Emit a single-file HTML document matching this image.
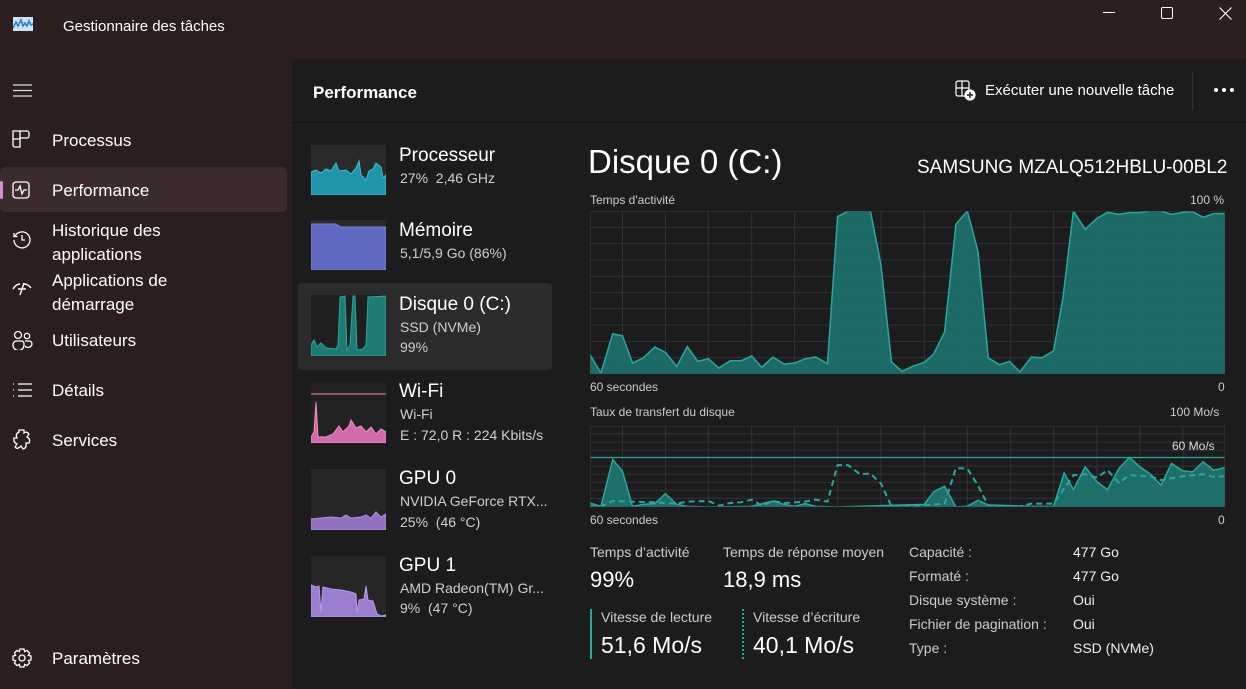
<!DOCTYPE html>
<html><head><meta charset="utf-8"><style>
*{margin:0;padding:0;box-sizing:border-box}
body{width:1246px;height:679px;overflow:hidden;background:#2a1e1f;font-family:"Liberation Sans",sans-serif;color:#fff;position:relative}
.a{position:absolute;white-space:nowrap}
.nav{font-size:17px;color:#fff}
.ic{position:absolute;left:12px}
.main{position:absolute;left:292px;top:59px;width:960px;height:630px;background:#1c1c1c;border-top-left-radius:8px}
.s{font-size:13px;color:#cfcfcf}
.g{color:#cccccc}
</style></head><body>
<!-- title bar -->
<svg class="a" style="left:13px;top:17px" width="20" height="14" viewBox="0 0 20 14"><rect width="20" height="14" fill="#cfe3f5"/><path d="M0 11 L3 5 L5 9 L8 3 L10 9 L12 6 L14 9 L16 4 L18 8 L20 7" stroke="#2f7fd0" stroke-width="1.6" fill="none"/></svg>
<div class="a" style="left:63px;top:18px;font-size:15px">Gestionnaire des tâches</div>
<div class="a" style="left:1103px;top:12px;width:12px;height:1px;background:#fff"></div>
<div class="a" style="left:1161px;top:7px;width:12px;height:12px;border:1px solid #fff;border-radius:2px"></div>
<svg class="a" style="left:1219px;top:7px" width="13" height="13"><path d="M0.5 0.5L12.5 12.5M12.5 0.5L0.5 12.5" stroke="#fff" stroke-width="1.1"/></svg>

<!-- sidebar -->
<svg class="a" style="left:13px;top:84px" width="19" height="13"><path d="M0 1H19M0 6.5H19M0 12H19" stroke="#ddd" stroke-width="1.2"/></svg>
<svg class="ic" style="top:130px" width="18" height="18" viewBox="0 0 18 18" fill="none" stroke="#fff" stroke-width="1.3"><path d="M1 1H8V17H3A2 2 0 0 1 1 15Z M1 9H8 M8 1H15A2 2 0 0 1 17 3V6A2 2 0 0 1 15 8H8"/></svg>
<div class="a nav" style="left:52px;top:131px">Processus</div>
<div class="a" style="left:0;top:167px;width:287px;height:45px;background:#3a2c2d;border-radius:5px"></div>
<div class="a" style="left:0;top:181px;width:3px;height:18px;background:#d98ad9;border-radius:2px"></div>
<svg class="ic" style="top:181px" width="18" height="18" viewBox="0 0 18 18" fill="none" stroke="#fff" stroke-width="1.3"><rect x="1" y="1" width="16" height="16" rx="3"/><path d="M3 9H6L8 5L10 13L12 9H15"/></svg>
<div class="a nav" style="left:52px;top:181px">Performance</div>
<svg class="ic" style="top:230px" width="20" height="20" viewBox="0 0 20 20" fill="none" stroke="#fff" stroke-width="1.3"><path d="M3 6A8 8 0 1 1 2 10M2 3V6.5H5.5M10 5V10H13"/></svg>
<div class="a nav" style="left:52px;top:219px;line-height:24px">Historique des<br>applications</div>
<svg class="ic" style="top:280px" width="20" height="16" viewBox="0 0 20 16" fill="none" stroke="#fff" stroke-width="1.4"><path d="M1 9Q4 4 8 4M12 4Q16 4 19 8M8 15L12 3M6 9L14 9"/></svg>
<div class="a nav" style="left:52px;top:269px;line-height:24px">Applications de<br>démarrage</div>
<svg class="ic" style="top:330px" width="21" height="20" viewBox="0 0 21 20" fill="none" stroke="#fff" stroke-width="1.3"><circle cx="6" cy="5" r="3.5"/><circle cx="15" cy="6" r="2.7"/><path d="M1 14A4 4 0 0 1 4 11H10A3 3 0 0 1 12 14V15A4 4 0 0 1 1 15ZM13 11H17A3 3 0 0 1 20 14A4 4 0 0 1 13 16"/></svg>
<div class="a nav" style="left:52px;top:331px">Utilisateurs</div>
<svg class="ic" style="top:383px" width="20" height="14" viewBox="0 0 20 14" fill="none" stroke="#fff" stroke-width="1.3"><path d="M6 1H20M6 7H20M6 13H20M1 1H2M1 7H2M1 13H2"/></svg>
<div class="a nav" style="left:52px;top:381px">Détails</div>
<svg class="ic" style="top:429px" width="20" height="22" viewBox="0 0 20 22" fill="none" stroke="#fff" stroke-width="1.3"><path d="M7 1H12L12 4Q15 2 17 5L15 8Q19 10 17 14L14 14Q15 19 11 20L9 17Q5 21 3 18L5 15Q1 13 2 9L5 9Q3 5 7 3Z"/></svg>
<div class="a nav" style="left:52px;top:431px">Services</div>
<svg class="ic" style="top:648px" width="20" height="20" viewBox="0 0 20 20" fill="none" stroke="#fff" stroke-width="1.3"><circle cx="10" cy="10" r="3"/><path d="M8 1H12L12.6 3.6L15 2.4L17.6 5L16.4 7.4L19 8V12L16.4 12.6L17.6 15L15 17.6L12.6 16.4L12 19H8L7.4 16.4L5 17.6L2.4 15L3.6 12.6L1 12V8L3.6 7.4L2.4 5L5 2.4L7.4 3.6Z"/></svg>
<div class="a nav" style="left:52px;top:649px">Paramètres</div>

<!-- main -->
<div class="main"></div>
<div class="a" style="left:292px;top:122px;width:954px;height:1px;background:#111"></div>
<div class="a" style="left:313px;top:83px;font-size:17px;font-weight:bold">Performance</div>
<svg class="a" style="left:955px;top:80px" width="21" height="21" viewBox="0 0 21 21" fill="none" stroke="#fff" stroke-width="1.2"><path d="M10 16H3A2 2 0 0 1 1 14V3A2 2 0 0 1 3 1H12A2 2 0 0 1 14 3V10M1 8H14M7 1V16"/><circle cx="15" cy="15" r="5" fill="#fff"/><path d="M15 12V18M12 15H18" stroke="#1c1c1c" stroke-width="1.4"/></svg>
<div class="a" style="left:985px;top:82px;font-size:15px">Exécuter une nouvelle tâche</div>
<div class="a" style="left:1192px;top:72px;width:1px;height:38px;background:#333"></div>
<svg class="a" style="left:1213px;top:87px" width="22" height="6"><circle cx="3" cy="3" r="2" fill="#fff"/><circle cx="11" cy="3" r="2" fill="#fff"/><circle cx="19" cy="3" r="2" fill="#fff"/></svg>

<!-- list -->
<div class="a" style="left:298px;top:283px;width:254px;height:87px;background:#2b2b2b;border-radius:3px"></div>
<svg class="a" style="left:311px;top:145px" width="75" height="50" viewBox="0 0 75 50"><rect width="75" height="50" fill="#2a2a2a"/><path d="M0 27L5 25L10 28L15 24L20 26L25 18L28 26L35 25L40 29L45 23L48 16L50 30L55 35L58 26L62 24L65 18L70 22L72 33L75 30V50H0Z" fill="#1e95a8" stroke="#3ac0d4"/></svg>
<div class="a" style="left:399px;top:145px;font-size:19px">Processeur</div>
<div class="a s" style="left:400px;top:170px;font-size:14px">27%&nbsp; 2,46 GHz</div>
<svg class="a" style="left:311px;top:220px" width="75" height="50" viewBox="0 0 75 50"><rect width="75" height="50" fill="#2a2a2a"/><path d="M0 4L24 4L30 7L75 7V50H0Z" fill="#5f69bf" stroke="#7a84e0"/></svg>
<div class="a" style="left:399px;top:220px;font-size:19px">Mémoire</div>
<div class="a s" style="left:400px;top:245px;font-size:14px">5,1/5,9 Go (86%)</div>
<svg class="a" style="left:311px;top:295px" width="75" height="61" viewBox="0 0 75 61"><rect width="75" height="61" fill="#1f1f1f"/><path d="M0 50L3 45L6 52L10 48L15 53L25 54L27 50L29 2L34 1L36 55L39 50L42 1L44 1L46 55L52 54L55 50L57 2L75 1V61H0Z" fill="#1f7a72" stroke="#2aa79d"/></svg>
<div class="a" style="left:399px;top:294px;font-size:19px">Disque 0 (C:)</div>
<div class="a s" style="left:400px;top:319px;font-size:14px">SSD (NVMe)</div>
<div class="a s" style="left:400px;top:339px;font-size:14px">99%</div>
<svg class="a" style="left:311px;top:382px" width="75" height="61" viewBox="0 0 75 61"><rect width="75" height="61" fill="#222"/><path d="M0 12H75" stroke="#f08cc8"/><path d="M0 55L3 50L5 20L7 55L15 55L22 52L28 44L32 50L38 44L40 38L45 46L50 44L55 50L60 45L65 52L70 47L75 50V61H0Z" fill="#d06aa8" stroke="#f090c8"/></svg>
<div class="a" style="left:399px;top:381px;font-size:19px">Wi-Fi</div>
<div class="a s" style="left:400px;top:406px;font-size:14px">Wi-Fi</div>
<div class="a s" style="left:400px;top:427px;font-size:14px">E : 72,0 R : 224 Kbits/s</div>
<svg class="a" style="left:311px;top:469px" width="75" height="61" viewBox="0 0 75 61"><rect width="75" height="61" fill="#262626"/><path d="M0 50L10 49L20 48L30 49L35 46L40 49L50 48L55 46L60 49L65 43L70 48L75 45V61H0Z" fill="#9172c0" stroke="#b090e0"/></svg>
<div class="a" style="left:399px;top:468px;font-size:19px">GPU 0</div>
<div class="a s" style="left:400px;top:493px;font-size:14px">NVIDIA GeForce RTX...</div>
<div class="a s" style="left:400px;top:514px;font-size:14px">25%&nbsp; (46 °C)</div>
<svg class="a" style="left:311px;top:556px" width="75" height="61" viewBox="0 0 75 61"><rect width="75" height="61" fill="#262626"/><path d="M0 29L5 31L8 30L10 56L12 31L20 33L30 34L40 36L45 38L46 57L48 44L53 43L55 30L57 44L62 45L66 58L70 60L75 59V61H0Z" fill="#9a7fd0" stroke="#b69ae8"/></svg>
<div class="a" style="left:399px;top:555px;font-size:19px">GPU 1</div>
<div class="a s" style="left:400px;top:580px;font-size:14px">AMD Radeon(TM) Gr...</div>
<div class="a s" style="left:400px;top:600px;font-size:14px">9%&nbsp; (47 °C)</div>

<!-- detail -->
<div class="a" style="left:588px;top:143px;font-size:33px">Disque 0 (C:)</div>
<div class="a" style="left:917px;top:157px;font-size:19px">SAMSUNG MZALQ512HBLU-00BL2</div>
<div class="a g" style="left:590px;top:193px;font-size:12px">Temps d'activité</div>
<div class="a g" style="left:1190px;top:193px;font-size:12px">100 %</div>
<svg class="a" style="left:590px;top:211px" width="635" height="163" viewBox="24 78 1508 490" preserveAspectRatio="none">
<rect x="24" y="78" width="1508" height="490" fill="#1c1c1c"/>
<path vector-effect="non-scaling-stroke" stroke="#333" d="M24 127H1532M24 176H1532M24 225H1532M24 274H1532M24 323H1532M24 372H1532M24 421H1532M24 470H1532M24 519H1532M101 78V568M203 78V568M305 78V568M408 78V568M510 78V568M612 78V568M715 78V568M818 78V568M920 78V568M1023 78V568M1125 78V568M1228 78V568M1330 78V568M1432 78V568"/>
<path vector-effect="non-scaling-stroke" d="M24 510L50 565L78 447L101 453L125 535L150 520L178 487L203 503L230 545L255 486L280 530L305 522L330 550L357 528L383 528L408 514L432 548L458 517L485 538L510 535L535 522L560 517L588 537L612 95L637 78L690 78L715 240L740 532L765 560L790 545L818 533L840 508L866 442L893 118L920 78L945 197L970 520L997 540L1020 530L1045 562L1072 517L1098 519L1125 498L1147 340L1172 78L1200 133L1228 100L1253 82L1280 88L1305 83L1330 83L1355 78L1380 78L1405 88L1432 82L1455 80L1480 97L1505 86L1532 86V568H24Z" fill="#1e6e6a" fill-opacity="0.95" stroke="#2aa79d" stroke-width="1.5"/>
<rect x="24" y="78" width="1508" height="490" fill="none" stroke="#3a3a3a" vector-effect="non-scaling-stroke"/>
</svg>
<div class="a g" style="left:590px;top:380px;font-size:12px">60 secondes</div>
<div class="a g" style="left:1218px;top:380px;font-size:12px">0</div>
<div class="a g" style="left:590px;top:405px;font-size:12px">Taux de transfert du disque</div>
<div class="a g" style="left:1170px;top:405px;font-size:12px">100 Mo/s</div>
<svg class="a" style="left:590px;top:426px" width="635" height="81" viewBox="24 78 1508 242" preserveAspectRatio="none">
<rect x="24" y="78" width="1508" height="242" fill="#1c1c1c"/>
<path vector-effect="non-scaling-stroke" stroke="#333" d="M24 102H1532M24 126H1532M24 150H1532M24 198H1532M24 222H1532M24 246H1532M24 270H1532M24 294H1532M101 78V320M203 78V320M305 78V320M408 78V320M510 78V320M612 78V320M715 78V320M818 78V320M920 78V320M1023 78V320M1125 78V320M1228 78V320M1330 78V320M1432 78V320"/>
<path vector-effect="non-scaling-stroke" d="M24 308L50 318L78 178L101 213L125 318L150 312L178 310L203 280L230 312L255 318L305 320L408 318L458 302L485 312L510 318L535 310L560 318L612 320L715 316L818 312L840 275L866 258L893 320L920 318L945 300L970 314L1023 316L1072 318L1125 318L1150 218L1172 268L1200 200L1228 245L1253 268L1280 205L1305 172L1330 200L1355 222L1380 255L1405 190L1432 212L1455 215L1480 185L1505 210L1532 202V320H24Z" fill="#1e6e6a" stroke="#2aa79d" stroke-width="1.5"/>
<path vector-effect="non-scaling-stroke" d="M24 318L50 318L78 302L125 304L178 306L230 310L255 304L305 302L330 316L357 308L383 306L408 298L432 316L458 302L485 308L535 304L560 298L588 304L612 195L637 195L665 222L690 220L715 250L740 318L790 318L818 315L866 310L893 204L920 205L945 255L970 316L1045 318L1072 310L1125 310L1150 265L1172 225L1200 222L1228 232L1253 210L1280 248L1305 225L1355 228L1380 240L1432 228L1480 222L1505 230L1532 228" fill="none" stroke="#2aa79d" stroke-width="2" stroke-dasharray="6 4"/>
<path vector-effect="non-scaling-stroke" d="M24 172H1532" stroke="#2aa79d" stroke-width="1.2"/>
<rect x="24" y="78" width="1508" height="242" fill="none" stroke="#3a3a3a" vector-effect="non-scaling-stroke"/>
</svg>
<div class="a" style="left:1172px;top:439px;font-size:12px;color:#ddd">60 Mo/s</div>
<div class="a g" style="left:590px;top:513px;font-size:12px">60 secondes</div>
<div class="a g" style="left:1218px;top:513px;font-size:12px">0</div>

<div class="a g" style="left:590px;top:544px;font-size:14px">Temps d’activité</div>
<div class="a" style="left:590px;top:567px;font-size:22px">99%</div>
<div class="a g" style="left:723px;top:544px;font-size:14px">Temps de réponse moyen</div>
<div class="a" style="left:723px;top:567px;font-size:22px">18,9 ms</div>
<div class="a" style="left:590px;top:609px;width:2px;height:50px;background:#2aa79d"></div>
<div class="a g" style="left:601px;top:609px;font-size:14px">Vitesse de lecture</div>
<div class="a" style="left:601px;top:632px;font-size:23px">51,6 Mo/s</div>
<div class="a" style="left:742px;top:609px;width:0;height:50px;border-left:2px dotted #2aa79d"></div>
<div class="a g" style="left:753px;top:609px;font-size:14px">Vitesse d’écriture</div>
<div class="a" style="left:753px;top:632px;font-size:23px">40,1 Mo/s</div>
<div class="a g" style="left:909px;top:540px;font-size:14px;line-height:24px">Capacité :<br>Formaté :<br>Disque système :<br>Fichier de pagination :<br>Type :</div>
<div class="a" style="left:1073px;top:540px;font-size:14px;line-height:24px;color:#eee">477 Go<br>477 Go<br>Oui<br>Oui<br>SSD (NVMe)</div>
</body></html>
